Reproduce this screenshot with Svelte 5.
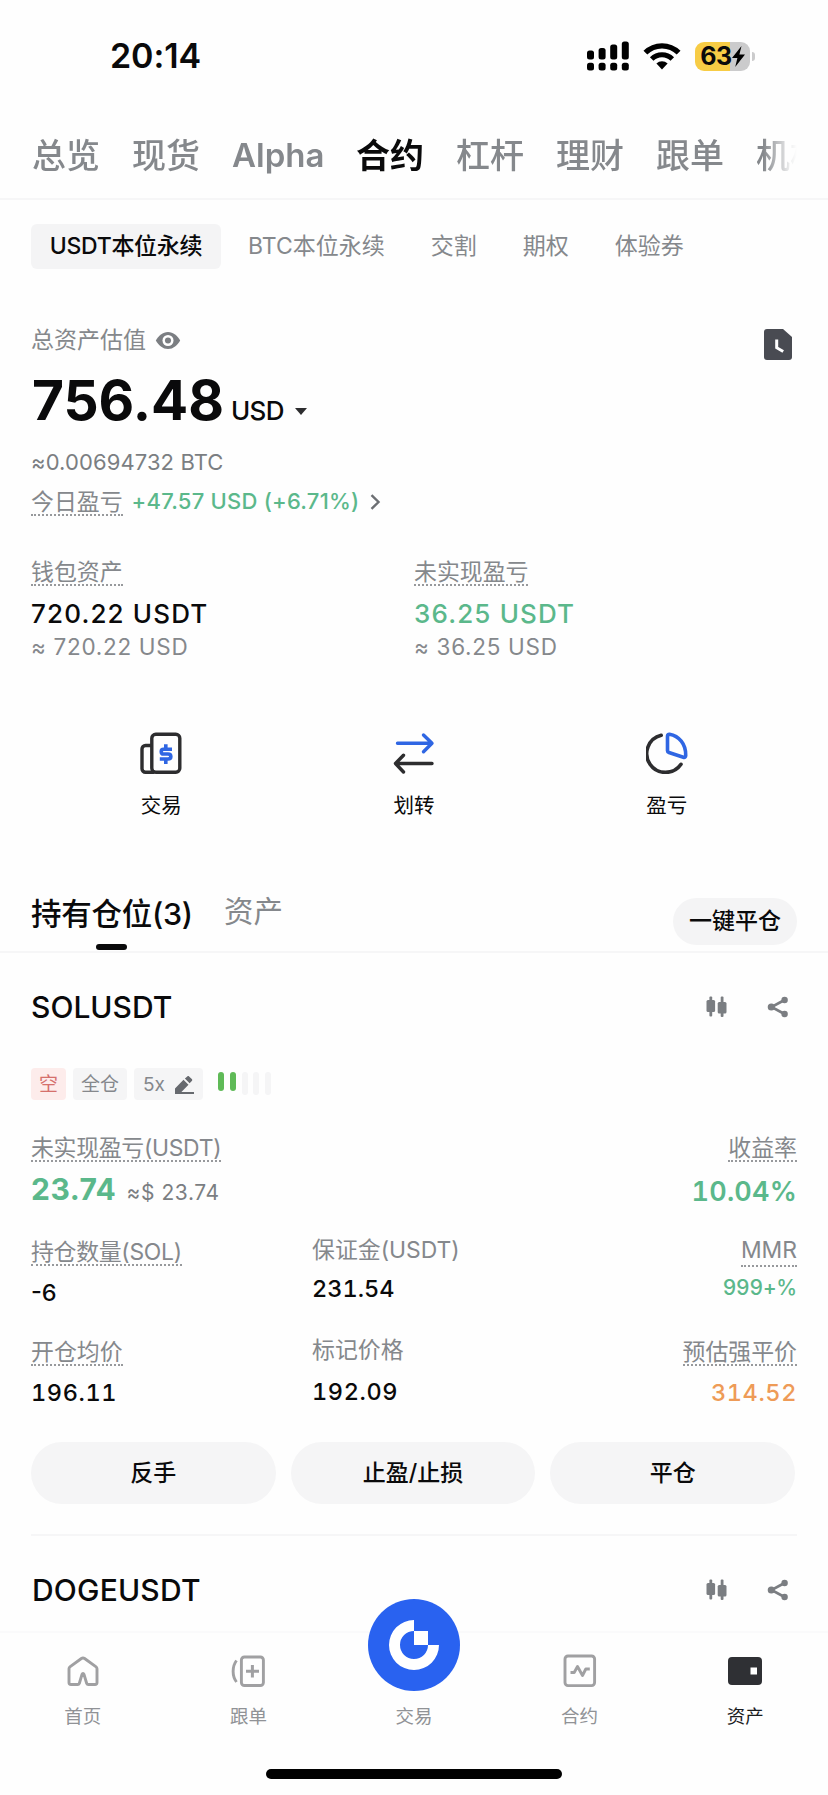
<script lang="ts">
  const mainTabs: string[] = ["总览", "现货", "Alpha", "合约", "杠杆", "理财", "跟单", "机构"];
  const contractTabs: string[] = ["USDT本位永续", "BTC本位永续", "交割", "期权", "体验券"];
  const positionActions: string[] = ["反手", "止盈/止损", "平仓"];

  let activeMain: string = "合约";
  let activeContract: string = "USDT本位永续";
  let activeNav: string = "资产";
  let riskLevel: number = 2;
</script>

{#snippet headIcons()}
  <div class="head-icons">
    <svg width="22" height="22" viewBox="0 0 22 22" fill="#7b7e82">
      <rect x="0.5" y="4" width="8.6" height="12" rx="1.5" />
      <rect x="3.4" y="0.5" width="2.8" height="20" rx="1" />
      <rect x="11.7" y="6" width="8.8" height="11.5" rx="1.5" />
      <rect x="14.7" y="0.5" width="2.8" height="20.5" rx="1" />
    </svg>
    <svg width="22" height="22" viewBox="0 0 22 22" fill="#7b7e82">
      <path d="M17.5 4 4.5 11l13 7" fill="none" stroke="#7b7e82" stroke-width="2.6" />
      <circle cx="17.6" cy="4" r="3.2" />
      <circle cx="4.3" cy="11" r="3.6" />
      <circle cx="17.6" cy="18" r="3.2" />
    </svg>
  </div>
{/snippet}

<div class="screen">
  <!-- Status bar -->
  <div class="status">
    <span class="time">20:14</span>
    <div class="status-icons">
      <svg width="43" height="30" viewBox="0 0 43 30">
        <rect x="0" y="9.5" width="7" height="9" rx="2.5" />
        <rect x="11.6" y="7" width="7" height="11.5" rx="2.5" />
        <rect x="23.2" y="3.5" width="7" height="15" rx="2.5" />
        <rect x="34.8" y="0.5" width="7" height="18" rx="2.5" />
        <rect x="0" y="21.8" width="7" height="7.6" rx="2.5" />
        <rect x="11.6" y="21.8" width="7" height="7.6" rx="2.5" />
        <rect x="23.2" y="21.8" width="7" height="7.6" rx="2.5" />
        <rect x="34.8" y="21.8" width="7" height="7.6" rx="2.5" />
      </svg>
      <svg class="wifi" width="38" height="28" viewBox="0 0 38 28" fill="none" stroke="#000">
        <path d="M2.4 10.7a23.5 23.5 0 0 1 33.2 0" stroke-width="5.4" />
        <path d="M8.7 16.9a14.6 14.6 0 0 1 20.6 0" stroke-width="5" />
        <path d="M19 27.5l-5.6-5.9a8 8 0 0 1 11.2 0z" fill="#000" stroke="none" />
      </svg>
      <div class="battery">
        <span>63</span>
        <svg width="13" height="21" viewBox="0 0 13 21"><path d="M9.5 0 0 12h5.4L3.2 21 13 8.6H7.4z" /></svg>
      </div>
      <i class="battery-tip"></i>
    </div>
  </div>

  <!-- Account tabs -->
  <nav class="main-tabs">
    {#each mainTabs as tab}
      <button class="main-tab" class:active={activeMain === tab} class:latin={tab === "Alpha"} on:click={() => (activeMain = tab)}>{tab}</button>
    {/each}
  </nav>

  <div class="contract-tabs">
    {#each contractTabs as tab}
      <button class="contract-tab" class:active={activeContract === tab} on:click={() => (activeContract = tab)}>{tab}</button>
    {/each}
  </div>

  <!-- Balance -->
  <section class="summary">
    <div class="summary-head">
      <div class="total-label">
        总资产估值
        <svg width="26" height="19" viewBox="0 0 27 20">
          <path d="M13.5 1C8 1 3.4 5 .7 10c2.7 5 7.3 9 12.8 9s10.1-4 12.8-9C23.6 5 19 1 13.5 1z" fill="#7b7e82" />
          <circle cx="13.5" cy="10" r="5.8" fill="#fff" />
          <circle cx="13.5" cy="10" r="3.2" fill="#7b7e82" />
        </svg>
      </div>
      <svg class="history" width="28" height="31" viewBox="0 0 28 31">
        <path d="M3 0h16l9 8v20a3 3 0 0 1-3 3H3a3 3 0 0 1-3-3V3a3 3 0 0 1 3-3z" fill="#494b52" />
        <path d="M12.7 10.5v8.2l6.5 3.8" fill="none" stroke="#fff" stroke-width="3" />
      </svg>
    </div>
    <div class="total">
      <strong>756.48</strong>
      <span>USD</span>
      <i class="caret"></i>
    </div>
    <div class="btc">≈0.00694732 BTC</div>
    <div class="today">
      <span class="label dotted">今日盈亏</span>
      <span class="today-value">+47.57 USD (+6.71%)</span>
      <svg width="11" height="16" viewBox="0 0 11 16"><path d="M1.5 1.2 8.5 8l-7 6.8" fill="none" stroke="#6c6f73" stroke-width="2.4" /></svg>
    </div>
    <div class="wallet">
      <div>
        <span class="label dotted">钱包资产</span>
        <div class="wallet-value">720.22 USDT</div>
        <div class="wallet-sub">≈ 720.22 USD</div>
      </div>
      <div>
        <span class="label dotted">未实现盈亏</span>
        <div class="wallet-value green">36.25 USDT</div>
        <div class="wallet-sub">≈ 36.25 USD</div>
      </div>
    </div>
  </section>

  <!-- Shortcuts -->
  <div class="shortcuts">
    <button>
      <svg width="42" height="42" viewBox="0 0 42 42" fill="none" stroke="#2d2d2f" stroke-width="3.4">
        <rect x="11.8" y="2.2" width="28" height="38" rx="4" />
        <path d="M11.8 13.5H5.5A3.5 3.5 0 0 0 2 17v19.7a3.5 3.5 0 0 0 3.5 3.5h9" />
        <path d="M32 17.3h-8.5c-3 0-3 4.7 0 4.7H28c3.8 0 3.8 5 0 5h-8.2M25.8 12.3v5M25.8 27v5" stroke="#2f66e3" stroke-width="3.6" />
      </svg>
      交易
    </button>
    <button>
      <svg width="42" height="42" viewBox="0 0 42 42" fill="none" stroke-width="3.4" stroke-linecap="round" stroke-linejoin="round">
        <path d="M4.5 11.3h34M30.5 3l8.5 8.3-8.5 8.5" stroke="#2f66e3" />
        <path d="M39 31.5H3M10.500 23.2 2.500 31.5l8 8.5" stroke="#2d2d2f" />
      </svg>
      划转
    </button>
    <button>
      <svg width="42" height="42" viewBox="0 0 42 42" fill="none" stroke-width="3.6" stroke-linecap="round" stroke-linejoin="round">
        <path d="M15.2 3.3A18.8 18.8 0 1 0 35 32.3" stroke="#2d2d2f" />
        <path d="M21.5 4c0-1.1.9-1.9 2-1.7C33 4 40 12 39.700 23.5c0 1.6-.8 2.2-2.4 1.7l-14.400-4.7c-1-.3-1.400-.8-1.400-1.800z" stroke="#2f66e3" />
      </svg>
      盈亏
    </button>
  </div>

  <!-- Positions -->
  <div class="list-tabs">
    <button class="list-tab active">持有仓位(3)</button>
    <button class="list-tab second">资产</button>
    <button class="close-all">一键平仓</button>
  </div>

  <section class="position">
    <div class="position-head first">
      <h2>SOLUSDT</h2>
      {@render headIcons()}
    </div>
    <div class="tags">
      <span class="tag short">空</span>
      <span class="tag">全仓</span>
      <span class="tag leverage">
        5x
        <svg width="19" height="18" viewBox="0 0 19 18" fill="#66696e">
          <path d="M0 18v-5.6L8.5 3.8l5 5L6.4 16H19v2z" />
          <path d="M9.900 2.500 12.300.4c.6-.5 1.200-.5 1.800 0l2.700 2.700c.6.6.6 1.200 0 1.800l-2.200 2.400z" />
        </svg>
      </span>
      <div class="risk">
        {#each [1, 2, 3, 4, 5] as level}
          <i class:on={level <= riskLevel}></i>
        {/each}
      </div>
    </div>

    <div class="pnl">
      <div>
        <span class="label dotted tight">未实现盈亏(USDT)</span>
        <div class="pnl-value"><b>23.74</b><span>≈$ 23.74</span></div>
      </div>
      <div class="right">
        <span class="label dotted">收益率</span>
        <div class="roi">10.04%</div>
      </div>
    </div>

    <div class="details">
      <div class="cell">
        <span class="label dotted tight">持仓数量(SOL)</span>
        <div class="value amount">-6</div>
      </div>
      <div class="cell mid">
        <span class="label">保证金(USDT)</span>
        <div class="value">231.54</div>
      </div>
      <div class="cell right mmr">
        <span class="label dotted">MMR</span>
        <div class="value">999+%</div>
      </div>
      <div class="cell">
        <span class="label dotted">开仓均价</span>
        <div class="value price">196.11</div>
      </div>
      <div class="cell mid">
        <span class="label">标记价格</span>
        <div class="value price mark">192.09</div>
      </div>
      <div class="cell right">
        <span class="label dotted">预估强平价</span>
        <div class="value price orange">314.52</div>
      </div>
    </div>

    <div class="actions">
      {#each positionActions as action}
        <button>{action}</button>
      {/each}
    </div>

    <div class="position-head next">
      <h2>DOGEUSDT</h2>
      {@render headIcons()}
    </div>
  </section>

  <!-- Bottom navigation -->
  <footer>
    <div class="nav">
      <button class:active={activeNav === "首页"} on:click={() => (activeNav = "首页")}>
        <span class="nav-icon">
          <svg width="32" height="30" viewBox="0 0 32 30" fill="none" stroke="#a0a0a2" stroke-width="2.9" stroke-linejoin="round">
            <path d="M2 12.800c0-1 .4-1.600 1.200-2.200L14.400 2.500c1.100-.8 2.100-.8 3.200 0l11.200 8.100c.8.6 1.200 1.200 1.200 2.200V26.500a2 2 0 0 1-2 2h-6.800c-.8 0-1.200-.3-1.500-1L17 18.300c-.5-1.100-1.500-1.100-2 0l-2.700 9.200c-.3.7-.7 1-1.500 1H4a2 2 0 0 1-2-2z" />
          </svg>
        </span>
        首页
      </button>
      <button class:active={activeNav === "跟单"} on:click={() => (activeNav = "跟单")}>
        <span class="nav-icon">
          <svg width="34" height="32" viewBox="0 0 34 32" fill="none" stroke="#a0a0a2" stroke-width="2.9">
            <rect x="10.4" y="2" width="22" height="28.5" rx="3" />
            <path d="M21.4 10v12.5M15 16.2h13" stroke-width="3" />
            <path d="M5.5 5.5c-4.5 6-4.5 15.500 0 21.500" />
          </svg>
        </span>
        跟单
      </button>
      <button class:active={activeNav === "交易"} on:click={() => (activeNav = "交易")}>
        <span class="trade">
          <svg width="50" height="50" viewBox="-25 -25 50 50" fill="#fff">
            <path d="M0-25A25 25 0 1 0 25 0H14A14 14 0 1 1 0-14z" />
            <rect x="0" y="-14" width="14" height="14" />
          </svg>
        </span>
        交易
      </button>
      <button class:active={activeNav === "合约"} on:click={() => (activeNav = "合约")}>
        <span class="nav-icon">
          <svg width="34" height="34" viewBox="0 0 34 34" fill="none" stroke="#a0a0a2" stroke-width="2.9">
            <rect x="2" y="2" width="29.6" height="29.6" rx="3" />
            <path d="M7.500 18.500h3.700l3.300-6 5 9 3.300-6.500h4" stroke-linejoin="round" />
          </svg>
        </span>
        合约
      </button>
      <button class:active={activeNav === "资产"} on:click={() => (activeNav = "资产")}>
        <span class="nav-icon">
          <svg width="34" height="28" viewBox="0 0 34 28">
            <rect width="34" height="28" rx="4" fill="#2f3034" />
            <rect x="22.5" y="10.5" width="6.5" height="7" fill="#fff" />
          </svg>
        </span>
        资产
      </button>
    </div>
    <div class="home-bar"></div>
  </footer>
</div>

<style>
  :global(body) {
    margin: 0;
    background: #fefefe;
  }

  .screen {
    width: 828px;
    height: 1795px;
    overflow: hidden;
    background: #fefefe;
    color: #0a0a0b;
    font-family: Inter, "Noto Sans CJK SC", sans-serif;
    line-height: 1.2;
  }

  button {
    padding: 0;
    border: none;
    background: none;
    color: inherit;
    font-family: inherit;
    line-height: 1.2;
    cursor: pointer;
  }

  svg {
    display: block;
    flex: none;
  }

  /* Status bar */
  .status {
    display: flex;
    justify-content: space-between;
    align-items: center;
    height: 112px;
    padding: 0 73px 0 110px;
    box-sizing: border-box;
  }

  .time {
    padding-top: 1px;
    font-size: 34px;
    font-weight: 600;
    letter-spacing: -0.1px;
  }

  .status-icons {
    display: flex;
    align-items: center;
  }

  .wifi {
    margin: 0 14px 0 13px;
  }

  .battery {
    display: flex;
    align-items: center;
    justify-content: center;
    width: 55px;
    height: 29px;
    border-radius: 9px;
    background: linear-gradient(to right, #f7cc45 63%, #cbcbcc 63%);
    font-size: 25px;
    font-weight: 700;
    letter-spacing: -0.4px;
  }

  .battery-tip {
    width: 3px;
    height: 9px;
    margin-left: 2px;
    border-radius: 0 3px 3px 0;
    background: #cbcbcc;
  }

  /* Account tabs */
  .main-tabs {
    display: flex;
    gap: 32px;
    height: 88px;
    padding: 2px 0 0 32px;
    border-bottom: 2px solid #f6f6f7;
    box-sizing: border-box;
    overflow: hidden;
    mask-image: linear-gradient(to right, #000 763px, #0002 790px, transparent 797px), linear-gradient(#000, #000);
    mask-size: 100% 84px, 100% 4px;
    mask-position: top, bottom;
    mask-repeat: no-repeat;
  }

  .main-tab {
    flex: none;
    color: #85888c;
    font-size: 34px;
    font-weight: 500;
  }

  .main-tab.latin {
    width: 92px;
    font-size: 33px;
    font-weight: 600;
  }

  .main-tab.active {
    color: #0a0a0b;
    font-weight: 700;
  }

  .contract-tabs {
    display: flex;
    gap: 46px;
    height: 45px;
    padding: 24px 0 0 31px;
  }

  .contract-tab {
    padding-top: 1px;
    color: #85888c;
    font-size: 23px;
    white-space: nowrap;
  }

  .contract-tab.active {
    width: 190px;
    margin-right: -19px;
    border-radius: 6px;
    background: #f4f4f5;
    color: #0a0a0b;
    font-weight: 500;
    letter-spacing: -0.3px;
  }

  /* Balance */
  .summary {
    padding: 57px 31px 0;
  }

  .summary-head {
    display: flex;
    justify-content: space-between;
    height: 30px;
    padding-right: 5px;
  }

  .total-label {
    display: flex;
    align-items: center;
    gap: 9px;
    color: #85888c;
    font-size: 23px;
  }

  .total-label svg {
    margin-bottom: 2px;
  }

  .history {
    margin-top: 3px;
  }

  .total {
    display: flex;
    align-items: baseline;
    height: 60px;
    margin-top: 14px;
    padding-left: 1px;
    line-height: 60px;
  }

  .total strong {
    font-size: 55px;
    font-weight: 700;
  }

  .total span {
    margin-left: 7px;
    font-size: 26px;
    font-weight: 500;
    letter-spacing: -0.7px;
  }

  .caret {
    margin: 0 0 5px 11px;
    border: 6px solid transparent;
    border-top: 7px solid #2d2d2f;
    border-bottom: none;
    transform: translateY(-5px);
  }

  .btc {
    margin-top: 17px;
    color: #7b7e82;
    font-size: 22px;
    letter-spacing: 0.1px;
    line-height: 30px;
  }

  .label {
    display: inline-block;
    height: 24px;
    color: #85888c;
    font-size: 22.9px;
    line-height: 24px;
    vertical-align: top;
    white-space: nowrap;
  }

  .label.dotted {
    border-bottom: 2px dotted #97999c;
  }

  .label.tight {
    letter-spacing: -0.3px;
  }

  .today {
    display: flex;
    margin-top: 13px;
    line-height: 24px;
  }

  .today-value {
    margin: -1px 11px 0 9px;
    color: #5bb88b;
    font-size: 22px;
    font-weight: 500;
    letter-spacing: 0.23px;
  }

  .today svg {
    margin-top: 4px;
  }

  .wallet {
    display: grid;
    grid-template-columns: 383px 1fr;
    margin-top: 44px;
  }

  .wallet-value {
    margin-top: 13px;
    font-size: 26px;
    font-weight: 500;
    letter-spacing: 1.15px;
    line-height: 30px;
  }

  .green {
    color: #5bb88b;
  }

  .wallet-sub {
    margin-top: 6px;
    color: #85888c;
    font-size: 22.5px;
    letter-spacing: 0.7px;
    line-height: 24px;
  }

  /* Shortcuts */
  .shortcuts {
    display: grid;
    grid-template-columns: repeat(3, 1fr);
    padding: 73px 35px 0;
  }

  .shortcuts button {
    display: flex;
    flex-direction: column;
    align-items: center;
    gap: 20px;
    font-size: 20.5px;
    line-height: 24px;
  }

  /* Position list header */
  .list-tabs {
    display: flex;
    height: 75px;
    margin-top: 60px;
    padding: 0 31px;
    border-bottom: 2px solid #f6f6f7;
    box-sizing: border-box;
  }

  .list-tab {
    position: relative;
    height: 73px;
    color: #85888c;
    font-size: 30.5px;
    line-height: 71px;
  }

  .list-tab.second {
    height: 66px;
    margin-left: 31px;
    font-size: 29.5px;
    line-height: 66px;
  }

  .list-tab.active {
    padding-bottom: 2px;
    color: #0a0a0b;
    font-weight: 500;
    letter-spacing: -0.25px;
  }

  .list-tab.active::after {
    content: "";
    position: absolute;
    bottom: 1px;
    left: 65px;
    width: 31px;
    height: 6px;
    border-radius: 3px;
    background: #0a0a0b;
  }

  .close-all {
    width: 124px;
    height: 47px;
    margin: 20px 0 0 auto;
    padding-top: 1px;
    border-radius: 24px;
    background: #f4f4f5;
    font-size: 23px;
    font-weight: 500;
  }

  /* Position */
  .position {
    padding: 0 31px;
  }

  .position-head {
    display: flex;
    justify-content: space-between;
    align-items: center;
    height: 40px;
  }

  .position-head.first {
    margin-top: 34px;
  }

  .position-head.next {
    margin-top: 30px;
    padding-top: 34px;
    border-top: 2px solid #f6f6f7;
  }

  h2 {
    margin: 0;
    font-size: 30px;
    font-weight: 500;
    letter-spacing: 0;
  }

  .next h2 {
    padding-left: 1px;
    letter-spacing: 0.2px;
  }

  .head-icons {
    display: flex;
    gap: 39px;
    padding-right: 8px;
  }

  .tags {
    display: flex;
    gap: 7px;
    height: 32px;
    margin-top: 41px;
  }

  .tag {
    display: flex;
    align-items: center;
    padding: 2px 8px 0;
    border-radius: 4px;
    background: #f5f5f6;
    color: #85888c;
    font-size: 19px;
  }

  .tag.short {
    background: #fdeceb;
    color: #d5706c;
  }

  .leverage {
    gap: 10px;
    padding: 2px 9px 0 9px;
  }

  .risk {
    display: flex;
    gap: 5.8px;
    padding: 4px 0 0 8px;
  }

  .risk i {
    width: 6px;
    height: 23px;
    border-radius: 3px;
    background: #f5f5f6;
  }

  .risk i.on {
    height: 19px;
    background: #5fba57;
  }

  .pnl {
    display: flex;
    justify-content: space-between;
    height: 101px;
    margin-top: 36px;
  }

  .pnl-value {
    display: flex;
    align-items: baseline;
    margin-top: 12px;
    line-height: 30px;
  }

  .pnl-value b {
    color: #5bb88b;
    font-size: 30px;
    font-weight: 700;
    letter-spacing: 0.5px;
  }

  .pnl-value span {
    margin-left: 10px;
    color: #7b7e82;
    font-size: 21px;
    letter-spacing: 0.6px;
  }

  .right {
    text-align: right;
  }

  .roi {
    margin-top: 15px;
    color: #5bb88b;
    font-size: 27px;
    font-weight: 600;
    font-variant-numeric: tabular-nums;
    letter-spacing: 0.2px;
    line-height: 30px;
  }

  .details {
    display: grid;
    grid-template-columns: 281px 1fr 1fr;
    grid-template-rows: 100px 105px;
  }

  .cell .label {
    margin-top: 3px;
  }

  .cell.mid .label {
    margin-top: 1px;
  }

  .value {
    margin-top: 13px;
    font-size: 23.5px;
    font-weight: 500;
    font-variant-numeric: tabular-nums;
    letter-spacing: 0;
    line-height: 28px;
  }

  .value.amount {
    font-variant-numeric: normal;
  }

  .value.price {
    letter-spacing: 0.6px;
  }

  .value.mark {
    margin-top: 16px;
  }

  .mmr .label {
    height: 27px;
    margin-top: 1px;
  }

  .mmr .value {
    margin-top: 7px;
    color: #5bb88b;
    font-size: 21px;
    letter-spacing: -0.2px;
  }

  .value.orange {
    color: #ee9b57;
  }

  .actions {
    display: grid;
    grid-template-columns: repeat(3, 1fr);
    gap: 15px;
    padding-right: 2px;
  }

  .actions button {
    height: 62px;
    padding-top: 2px;
    border-radius: 31px;
    background: #f5f5f6;
    font-size: 23px;
    font-weight: 500;
  }

  /* Bottom navigation */
  footer {
    margin-top: 21px;
    border-top: 2px solid #fafafb;
    background: #fefefe;
  }

  .nav {
    display: grid;
    grid-template-columns: repeat(5, 1fr);
    padding-top: 17px;
  }

  .nav button {
    display: flex;
    flex-direction: column;
    align-items: center;
    color: #909296;
    font-size: 18.5px;
    line-height: 24px;
  }

  .nav button.active {
    color: #1b1c1e;
  }

  .nav-icon {
    display: flex;
    align-items: center;
    height: 42px;
    margin-bottom: 12px;
  }

  .trade {
    display: flex;
    align-items: center;
    justify-content: center;
    width: 92px;
    height: 92px;
    margin: -51px 0 13px;
    border-radius: 50%;
    background: #2962f0;
  }

  .home-bar {
    width: 296px;
    height: 10px;
    margin: 41px auto 0;
    border-radius: 5px;
    background: #000;
  }
</style>
